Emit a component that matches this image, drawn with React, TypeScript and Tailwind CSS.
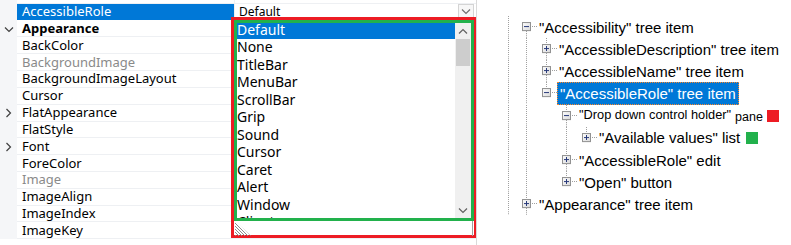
import React from "react";

type GridRow = {
  name: string;
  kind?: "category" | "dim" | "selected";
  chevron?: "down" | "right";
};

const gridRows: GridRow[] = [
  { name: "AccessibleName" },
  { name: "AccessibleRole", kind: "selected" },
  { name: "Appearance", kind: "category", chevron: "down" },
  { name: "BackColor" },
  { name: "BackgroundImage", kind: "dim" },
  { name: "BackgroundImageLayout" },
  { name: "Cursor" },
  { name: "FlatAppearance", chevron: "right" },
  { name: "FlatStyle" },
  { name: "Font", chevron: "right" },
  { name: "ForeColor" },
  { name: "Image", kind: "dim" },
  { name: "ImageAlign" },
  { name: "ImageIndex" },
  { name: "ImageKey" },
];

const roles = [
  "Default",
  "None",
  "TitleBar",
  "MenuBar",
  "ScrollBar",
  "Grip",
  "Sound",
  "Cursor",
  "Caret",
  "Alert",
  "Window",
  "Client",
  "MenuPopup",
];

function Chevron({ dir }: { dir: "down" | "right" | "up" }) {
  const d =
    dir === "down" ? "M1 1.5 L5 5.5 L9 1.5" : dir === "up" ? "M1 5.5 L5 1.5 L9 5.5" : "M1.5 1 L5.5 5 L1.5 9";
  const w = dir === "right" ? 8 : 10;
  const h = dir === "right" ? 10 : 7;
  return (
    <svg width={w} height={h} viewBox={`0 0 ${w} ${h}`} fill="none">
      <path d={d} stroke="currentColor" strokeWidth="1.2" />
    </svg>
  );
}

function PropertyGrid() {
  return (
    <div className="relative h-[245px] w-[477px] shrink-0 overflow-hidden border-r border-[#dadada] bg-white font-['Noto_Sans',sans-serif] text-[13px] text-black">
      <div className="-mt-[13px] flex flex-col">
        {gridRows.map((r) => (
          <div key={r.name} className="flex h-[16.82px] shrink-0">
            <div className="flex w-[17px] shrink-0 items-center justify-center bg-[#f5f6f8] text-[#404040]">
              {r.chevron && <Chevron dir={r.chevron} />}
            </div>
            <div
              className={
                "flex w-[217px] shrink-0 items-center border-b pl-[5px] leading-none " +
                (r.kind === "selected"
                  ? "border-white bg-[#0078d7] text-white"
                  : "border-[#eef0f3]") +
                (r.kind === "category" ? " font-bold" : "") +
                (r.kind === "dim" ? " text-[#8a8a8a]" : "")
              }
            >
              {r.name}
            </div>
            <div className="flex flex-1 items-center border-b border-l border-[#eef0f3] pl-[4px] text-[12px] leading-none">
              {r.kind === "selected" && (
                <>
                  <span className="flex-1">Default</span>
                  <span className="mr-[2px] flex h-[15px] w-[16px] items-center justify-center border border-[#d4d4d4] bg-[#f7f7f7] text-[#707070]">
                    <Chevron dir="down" />
                  </span>
                </>
              )}
            </div>
          </div>
        ))}
      </div>

      {/* drop down list, outlined red / green */}
      <div className="absolute left-[231px] top-[17px] flex h-[221px] w-[246px] flex-col border-[3px] border-[#ed1c24] bg-white">
        <div className="flex h-[201px] shrink-0 border-[3px] border-[#22b14c]">
          <div className="flex-1 overflow-hidden text-[14px]">
            <div className="-mt-[2px] flex flex-col">
              {roles.map((r, i) => (
                <div
                  key={r}
                  className={
                    "flex h-[17.5px] shrink-0 items-center leading-none " +
                    (i === 0 ? "bg-[#0078d7] text-white" : "text-black")
                  }
                >
                  {r}
                </div>
              ))}
            </div>
          </div>
          <div className="flex w-[16px] shrink-0 flex-col bg-[#f0f0f0] text-[#606060]">
            <div className="flex h-[16px] items-center justify-center">
              <Chevron dir="up" />
            </div>
            <div className="mx-[1px] h-[27px] bg-[#cdcdcd]" />
            <div className="flex-1" />
            <div className="flex h-[16px] items-center justify-center">
              <Chevron dir="down" />
            </div>
          </div>
        </div>
        <div className="mr-[1px] flex flex-1 items-end border-r border-[#a0a0a0]">
          <svg width="16" height="15" viewBox="0 0 16 15" className="ml-[1px]">
            <defs>
              <clipPath id="grip">
                <path d="M0 0 L0 15 L16 15 Z" />
              </clipPath>
            </defs>
            <g clipPath="url(#grip)" stroke="#8c8c8c" strokeWidth="1">
              {[-14, -11, -8, -5, -2, 1, 4, 7, 10, 13].map((o) => (
                <line key={o} x1={o} y1={0} x2={o + 15} y2={15} />
              ))}
            </g>
          </svg>
        </div>
      </div>
    </div>
  );
}

type TreeNode = {
  depth: number;
  cols: boolean[];
  box: "plus" | "minus";
  up: boolean;
  down: boolean;
  content: React.ReactNode;
  selected?: boolean;
};

function AncestorLine({ on, first }: { on: boolean; first: boolean }) {
  return (
    <svg
      className={(first ? "w-[18px]" : "w-[20px]") + " h-full shrink-0"}
      viewBox={`0 0 ${first ? 18 : 20} 22`}
      preserveAspectRatio="none"
    >
      {on && <line x1="9.5" y1="0" x2="9.5" y2="22" stroke="#a0a0a0" strokeDasharray="1 1" />}
    </svg>
  );
}

function BoxCell({ box, up, down }: { box: "plus" | "minus"; up: boolean; down: boolean }) {
  return (
    <svg className="h-full w-[20px] shrink-0" viewBox="0 0 20 22" preserveAspectRatio="none">
      <defs>
        <linearGradient id="boxfill" x1="0" y1="0" x2="1" y2="1">
          <stop offset="0" stopColor="#ffffff" />
          <stop offset="1" stopColor="#d8d8d8" />
        </linearGradient>
      </defs>
      {up && <line x1="9.5" y1="0" x2="9.5" y2="6" stroke="#a0a0a0" strokeDasharray="1 1" />}
      {down && <line x1="9.5" y1="15" x2="9.5" y2="22" stroke="#a0a0a0" strokeDasharray="1 1" />}
      <line x1="15" y1="10.5" x2="20" y2="10.5" stroke="#a0a0a0" strokeDasharray="1 1" />
      <rect x="5.5" y="6.5" width="8" height="8" fill="url(#boxfill)" stroke="#919191" />
      <line x1="7" y1="10.5" x2="12" y2="10.5" stroke="#283a7a" />
      {box === "plus" && <line x1="9.5" y1="8" x2="9.5" y2="13" stroke="#283a7a" />}
    </svg>
  );
}

const treeRows: TreeNode[] = [
  { depth: 0, cols: [true], box: "minus", up: false, down: true, content: <>"Accessibility" tree item</> },
  { depth: 1, cols: [true, true], box: "plus", up: true, down: true, content: <>"AccessibleDescription" tree item</> },
  { depth: 1, cols: [true, true], box: "plus", up: true, down: true, content: <>"AccessibleName" tree item</> },
  { depth: 1, cols: [true, true], box: "minus", up: true, down: false, selected: true, content: <>"AccessibleRole" tree item</> },
  {
    depth: 2,
    cols: [true, true, false],
    box: "minus",
    up: true,
    down: true,
    content: (
      <span className="flex items-center">
        <span className="text-[12.8px]">"Drop down control holder"</span>
        <span className="ml-[4px] mt-[3px] text-[12.5px]">pane</span>
        <span className="ml-[4px] h-[12px] w-[12px] bg-[#ed1c24]" />
      </span>
    ),
  },
  {
    depth: 3,
    cols: [true, true, false, true],
    box: "plus",
    up: true,
    down: false,
    content: (
      <span className="flex items-center">
        "Available values" list
        <span className="ml-[6px] h-[12px] w-[12px] bg-[#22b14c]" />
      </span>
    ),
  },
  { depth: 2, cols: [true, true, false], box: "plus", up: true, down: true, content: <>"AccessibleRole" edit</> },
  { depth: 2, cols: [true, true, false], box: "plus", up: true, down: false, content: <>"Open" button</> },
  { depth: 0, cols: [true], box: "plus", up: true, down: true, content: <>"Appearance" tree item</> },
];

function TreeView() {
  return (
    <div className="ml-[22px] flex flex-1 flex-col pt-[16px] font-['Liberation_Sans',sans-serif] text-[15px] text-black">
      {treeRows.map((n, i) => (
        <div key={i} className="flex h-[22.16px] shrink-0 items-stretch">
          {n.cols.map((on, c) => (
            <AncestorLine key={c} on={on} first={c === 0} />
          ))}
          <BoxCell box={n.box} up={n.up} down={n.down} />
          <div
            className={
              "flex items-center whitespace-nowrap px-[2px] leading-none " +
              (n.selected ? "border border-dotted border-[#ff8728] bg-[#0078d7] text-white" : "")
            }
          >
            {n.content}
          </div>
        </div>
      ))}
    </div>
  );
}

export default function App() {
  return (
    <div className="flex h-[245px] w-[791px] overflow-hidden bg-white">
      <PropertyGrid />
      <TreeView />
    </div>
  );
}
